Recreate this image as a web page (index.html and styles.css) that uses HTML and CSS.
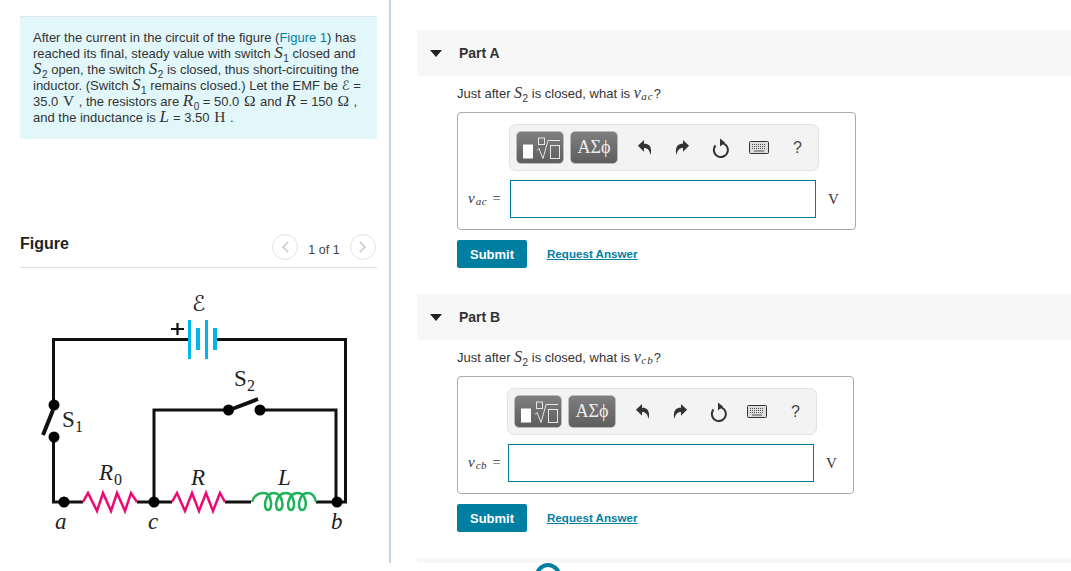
FILE: index.html
```html
<!DOCTYPE html>
<html lang="en">

<head>
    <meta charset="UTF-8">
    <title>Part A and Part B</title>
    <link rel="stylesheet" href="styles.css">
</head>

<body>
    <svg class="icon-defs">
        <symbol id="icon-undo" viewBox="0 0 16 18">
            <path d="M1 7 L7.500 1 V5 C12.500 4.500 16.500 8 14.500 17 C13.500 12 11.500 9.500 7.500 9.500 V13.500 Z" />
        </symbol>
        <symbol id="icon-redo" viewBox="0 0 16 18">
            <path d="M15 7 L8.500 1 V5 C3.500 4.500 -0.500 8 1.500 17 C2.500 12 4.500 9.500 8.500 9.500 V13.500 Z" />
        </symbol>
        <symbol id="icon-reset" viewBox="0 0 18 20">
            <path class="icon-line" d="M8.500 5 A7 7 0 1 1 3.500 7.500" />
            <path d="M8 0.500 L13 4.500 L8 8.500 Z" />
        </symbol>
        <symbol id="icon-keyboard" viewBox="0 0 20 13">
            <rect class="icon-keys" x="0.5" y="0.5" width="19" height="12" rx="1" />
            <path class="icon-dots" d="M3 3.500H17M3 5.500H17M3 7.500H17" />
            <path class="icon-bar" d="M5 10H15" />
        </symbol>
        <symbol id="icon-template" viewBox="0 0 44 26">
            <rect class="icon-white" x="5" y="9.500" width="10" height="14" />
            <rect class="icon-outline" x="20.500" y="3" width="6" height="6.500" />
            <path class="icon-outline" d="M19 15.500 L21 13.500 L25 23.500 L30 5.500 H42" />
            <rect class="icon-outline" x="32.500" y="10.500" width="9" height="13" />
        </symbol>
    </svg>

    <div class="left-col">
        <div class="intro">
            After the current in the circuit of the figure (<a class="figure-link" href="#">Figure 1</a>) has<br>
            reached its final, steady value with switch <span class="mi">S</span><sub>1</sub> closed and<br>
            <span class="mi">S</span><sub>2</sub> open, the switch <span class="mi">S</span><sub>2</sub> is closed, thus short-circuiting the<br>
            inductor. (Switch <span class="mi">S</span><sub>1</sub> remains closed.) Let the EMF be <span class="script">ℰ</span> =<br>
            35.0 <span class="mr">V</span> , the resistors are <span class="mi">R</span><sub>0</sub> = 50.0 <span class="mr">Ω</span> and <span class="mi">R</span> = 150 <span class="mr">Ω</span> ,<br>
            and the inductance is <span class="mi">L</span> = 3.50 <span class="mr">H</span> .
        </div>

        <div class="figure-head">
            <h2>Figure</h2>
            <div class="pager">
                <span class="pager-btn">
                    <svg width="8" height="12" viewBox="0 0 8 12"><path d="M7 1 L2 6 L7 11" /></svg>
                </span>
                <span class="pager-text">1 of 1</span>
                <span class="pager-btn">
                    <svg width="8" height="12" viewBox="0 0 8 12"><path d="M1 1 L6 6 L1 11" /></svg>
                </span>
            </div>
        </div>

        <!-- viewBox uses page coordinates, easier to read off the drawing -->
        <svg class="circuit" width="369" height="295" viewBox="0 268 369 295">
            <path class="wire" d="M188 339.5 H53.5 V405 M53.5 437 V502 H83 M137 502 H172 M225 502 H251 M316 502 H337" />
            <path class="wire" d="M215 339.5 H345.5 V502 H337" />
            <path class="wire" d="M154 502 V410 H228 M260 410 H336 V502" />
            <path class="wire thick" d="M53 410 L43 435 M232 409 L258 399" />
            <circle cx="54" cy="405" r="5.5" />
            <circle cx="54" cy="437" r="5.5" />
            <circle cx="228.5" cy="410" r="5.5" />
            <circle cx="260" cy="410" r="5.5" />
            <circle cx="64" cy="502" r="5.5" />
            <circle cx="154" cy="502" r="5.5" />
            <circle cx="337" cy="502" r="5.5" />

            <path class="battery" d="M189.5 320 V359 M206.5 320 V359" />
            <path class="battery short" d="M198 328 V350 M215 328 V350" />
            <path class="plus" d="M171 329 H184 M177.500 323 V335" />

            <path class="resistor" d="M83 502 L88 493 L97 511 L103 493 L111 511 L117 493 L125 511 L131 493 L137 502" />
            <path class="resistor" d="M172 502 L177 493 L185 511 L192 493 L199 511 L206 493 L213 511 L220 493 L225 502" />
            <path class="inductor" d="M252 502 C254 495 259 493 264 493 C272 493 273 510 268 510 C263 510 264 493 274 493 C283 493 285 510 279 510 C274 510 275 493 286 493 C295 493 296 510 291 510 C286 510 287 493 298 493 C307 493 308 510 302 510 C297 510 298 493 308 493 C313 493 315 497 316 502" />

            <text class="label script-label" x="192" y="311">ℰ</text>
            <text class="label" x="234" y="386">S</text>
            <text class="label small" x="247" y="391">2</text>
            <text class="label" x="62" y="427">S</text>
            <text class="label small" x="75" y="432">1</text>
            <text class="label italic" x="99" y="480">R</text>
            <text class="label small" x="114" y="485">0</text>
            <text class="label italic" x="191" y="485">R</text>
            <text class="label italic" x="278" y="485">L</text>
            <text class="label italic" x="55" y="529">a</text>
            <text class="label italic" x="148" y="529">c</text>
            <text class="label italic" x="331" y="529">b</text>
        </svg>
    </div>

    <div class="right-col">
        <section class="part">
            <div class="part-head"><span class="caret"></span>Part A</div>
            <div class="part-body">
                <p class="question">Just after <span class="mi">S</span><sub>2</sub> is closed, what is <span class="mi">v<sub>ac</sub></span>?</p>
                <div class="answer answer-a">
                    <div class="toolbar">
                        <span class="tool-btn"><svg width="44" height="26"><use href="#icon-template" /></svg></span>
                        <span class="tool-btn greek">ΑΣϕ</span>
                        <svg class="tool undo" width="15" height="17"><use href="#icon-undo" /></svg>
                        <svg class="tool redo" width="15" height="17"><use href="#icon-redo" /></svg>
                        <svg class="tool reset" width="18" height="20"><use href="#icon-reset" /></svg>
                        <svg class="tool keyboard" width="20" height="13"><use href="#icon-keyboard" /></svg>
                        <span class="tool-help">?</span>
                    </div>
                    <div class="answer-row">
                        <span class="answer-label"><span class="mi">v<sub>ac</sub></span> =</span>
                        <span class="answer-input"></span>
                        <span class="unit">V</span>
                    </div>
                </div>
                <div class="actions">
                    <button class="submit">Submit</button>
                    <a class="request" href="#">Request Answer</a>
                </div>
            </div>
        </section>

        <section class="part">
            <div class="part-head"><span class="caret"></span>Part B</div>
            <div class="part-body">
                <p class="question">Just after <span class="mi">S</span><sub>2</sub> is closed, what is <span class="mi">v<sub>cb</sub></span>?</p>
                <div class="answer answer-b">
                    <div class="toolbar">
                        <span class="tool-btn"><svg width="44" height="26"><use href="#icon-template" /></svg></span>
                        <span class="tool-btn greek">ΑΣϕ</span>
                        <svg class="tool undo" width="15" height="17"><use href="#icon-undo" /></svg>
                        <svg class="tool redo" width="15" height="17"><use href="#icon-redo" /></svg>
                        <svg class="tool reset" width="18" height="20"><use href="#icon-reset" /></svg>
                        <svg class="tool keyboard" width="20" height="13"><use href="#icon-keyboard" /></svg>
                        <span class="tool-help">?</span>
                    </div>
                    <div class="answer-row">
                        <span class="answer-label"><span class="mi">v<sub>cb</sub></span> =</span>
                        <span class="answer-input"></span>
                        <span class="unit">V</span>
                    </div>
                </div>
                <div class="actions">
                    <button class="submit">Submit</button>
                    <a class="request" href="#">Request Answer</a>
                </div>
            </div>
        </section>

        <div class="next-part"></div>
        <span class="spinner"></span>
    </div>
</body>

</html>
```

FILE: styles.css
```css
* {
    margin: 0;
    padding: 0;
    box-sizing: border-box;
}

html,
body {
    height: 571px;
    overflow: hidden;
}

body {
    display: flex;
    align-items: flex-start;
    font-family: 'Liberation Sans', Arial, sans-serif;
    color: #333;
    background: #fff;
}

.icon-defs {
    display: none;
}

.mi {
    font-family: 'Liberation Serif', serif;
    font-style: italic;
    font-size: 17px;
    letter-spacing: 0.5px;
    line-height: 0;
}

.mr {
    margin: 0 1px;
    font-family: 'Liberation Serif', serif;
    font-size: 15.5px;
    line-height: 0;
}

.script {
    font-family: 'DejaVu Sans', sans-serif;
    font-style: italic;
    font-size: 13px;
    line-height: 0;
}

sub {
    font-size: 10px;
    line-height: 0;
}

.mi sub {
    font-size: 11px;
    vertical-align: -2px;
}

/* left column */
.left-col {
    width: 391px;
    height: 563px;
    flex: none;
    padding: 16px 0 0 20px;
    border-right: 2px solid #c5d5e4;
}

.intro {
    width: 357px;
    height: 123px;
    padding: 13px 0 0 13px;
    background: #e2f7fa;
    border-top: 1px solid #dde6ea;
    font-size: 13px;
    line-height: 16px;
    white-space: nowrap;
}

.figure-link {
    color: #007fa3;
    text-decoration: none;
}

.figure-head {
    width: 357px;
    height: 40px;
    margin-top: 89px;
    border-bottom: 1px solid #ddd;
    display: flex;
    justify-content: space-between;
    align-items: flex-start;
}

.figure-head h2 {
    font-size: 16px;
    line-height: 32px;
    color: #222;
}

.pager {
    display: flex;
    align-items: center;
    margin-right: 1px;
    margin-top: 6px;
}

.pager-btn {
    width: 26px;
    height: 26px;
    border: 1px solid #e2e2e2;
    border-radius: 50%;
    display: flex;
    align-items: center;
    justify-content: center;
}

.pager-btn path {
    fill: none;
    stroke: #c8c8c8;
    stroke-width: 1.5;
}

.pager-text {
    width: 52px;
    text-align: center;
    font-size: 12.5px;
    color: #444;
    padding-top: 6px;
}

.circuit {
    display: block;
    margin-left: -20px;
}

.wire {
    fill: none;
    stroke: #111;
    stroke-width: 3;
    stroke-linejoin: miter;
}

.wire.thick {
    stroke-width: 4;
}

.battery {
    fill: none;
    stroke: #00b5ea;
    stroke-width: 3;
}

.battery.short {
    stroke-width: 4;
}

.plus {
    fill: none;
    stroke: #111;
    stroke-width: 2.2;
}

.resistor {
    fill: none;
    stroke: #ec0a72;
    stroke-width: 2.5;
}

.inductor {
    fill: none;
    stroke: #1fb25a;
    stroke-width: 2.5;
}

.label {
    font-family: 'Liberation Serif', serif;
    font-size: 23px;
    fill: #222;
}

.label.italic {
    font-style: italic;
}

.label.small {
    font-size: 16px;
}

.label.script-label {
    font-family: 'DejaVu Sans', sans-serif;
    font-style: italic;
    font-size: 22px;
}

/* right column */
.right-col {
    flex: 1;
    position: relative;
    height: 571px;
    margin-left: 26px;
    padding-top: 30px;
    overflow: hidden;
}

.part {
    margin-bottom: 26px;
}

.part-head {
    height: 46px;
    background: #f7f7f7;
    display: flex;
    align-items: center;
    padding-left: 13px;
    font-size: 14px;
    font-weight: bold;
    color: #333;
}

.caret {
    width: 0;
    height: 0;
    margin-right: 17px;
    border-left: 6px solid transparent;
    border-right: 6px solid transparent;
    border-top: 7px solid #222;
}

.part-body {
    padding-left: 40px;
}

.question {
    font-size: 13px;
    line-height: 16px;
    margin-top: 10px;
    margin-bottom: 10px;
}

.question .mi {
    font-size: 16px;
}

.question .mi sub {
    letter-spacing: 1px;
}

.answer {
    height: 118px;
    border: 1px solid #aaa;
    border-radius: 4px;
    padding: 11px 0 0 10px;
}

.answer-a {
    width: 399px;
}

.answer-b {
    width: 397px;
}

.toolbar {
    width: 310px;
    height: 47px;
    background: #f3f3f3;
    border: 1px solid #e2e2e2;
    border-radius: 7px;
    display: flex;
    align-items: center;
    padding-left: 6px;
}

.answer-a .toolbar {
    margin-left: 41px;
}

.answer-b .toolbar {
    margin-left: 39px;
}

.tool-btn {
    width: 48px;
    height: 33px;
    margin-right: 6px;
    border-radius: 5px;
    background: linear-gradient(#7f7f7f, #5e5e5e);
    border: 1px solid #bbb;
    display: flex;
    align-items: center;
    justify-content: center;
}

.greek {
    font-family: 'Liberation Serif', serif;
    font-size: 18px;
    color: #eee;
}

.icon-white {
    fill: #fff;
}

.icon-outline {
    fill: none;
    stroke: #e6e6e6;
    stroke-width: 1;
}

.tool {
    fill: #333;
    flex: none;
}

.undo {
    margin-left: 13px;
}

.redo {
    margin-left: 23px;
}

.reset {
    margin-left: 22px;
}

.keyboard {
    margin-left: 19px;
}

.icon-line {
    fill: none;
    stroke: #333;
    stroke-width: 2;
}

.icon-keys {
    fill: #ddd;
    stroke: #333;
    stroke-width: 1;
}

.icon-dots {
    fill: none;
    stroke: #555;
    stroke-width: 1;
    stroke-dasharray: 1 1;
}

.icon-bar {
    fill: none;
    stroke: #555;
    stroke-width: 1;
}

.tool-help {
    margin-left: 24px;
    font-size: 16px;
    color: #444;
}

.answer-row {
    display: flex;
    align-items: center;
    margin-top: 9px;
}

.answer-label {
    font-family: 'Liberation Serif', serif;
    font-size: 14px;
    color: #333;
    white-space: nowrap;
    word-spacing: 2px;
}

.answer-label .mi {
    font-size: 15px;
    letter-spacing: 1px;
}

.answer-label .mi sub {
    font-size: 11px;
    letter-spacing: 0.5px;
}

.answer-a .answer-label {
    width: 42px;
}

.answer-b .answer-label {
    width: 40px;
}

.answer-input {
    width: 306px;
    height: 38px;
    border: 1px solid #007b9e;
    background: #fff;
}

.unit {
    margin-left: 12px;
    font-family: 'Liberation Serif', serif;
    font-size: 15px;
}

.actions {
    display: flex;
    align-items: center;
    margin-top: 10px;
}

.submit {
    width: 70px;
    height: 28px;
    background: #007fa3;
    color: #fff;
    border: none;
    border-radius: 2px;
    font-family: 'Liberation Sans', Arial, sans-serif;
    font-size: 13px;
    font-weight: bold;
}

.request {
    margin-left: 20px;
    margin-top: -2px;
    color: #007fa3;
    font-size: 11.6px;
    font-weight: bold;
}

.next-part {
    height: 5px;
    background: #f7f7f7;
}

/* loading spinner peeking in at the bottom edge */
.spinner {
    position: absolute;
    left: 118px;
    top: 563px;
    width: 26px;
    height: 26px;
    border: 4px solid #007fa3;
    border-radius: 50%;
}
```
